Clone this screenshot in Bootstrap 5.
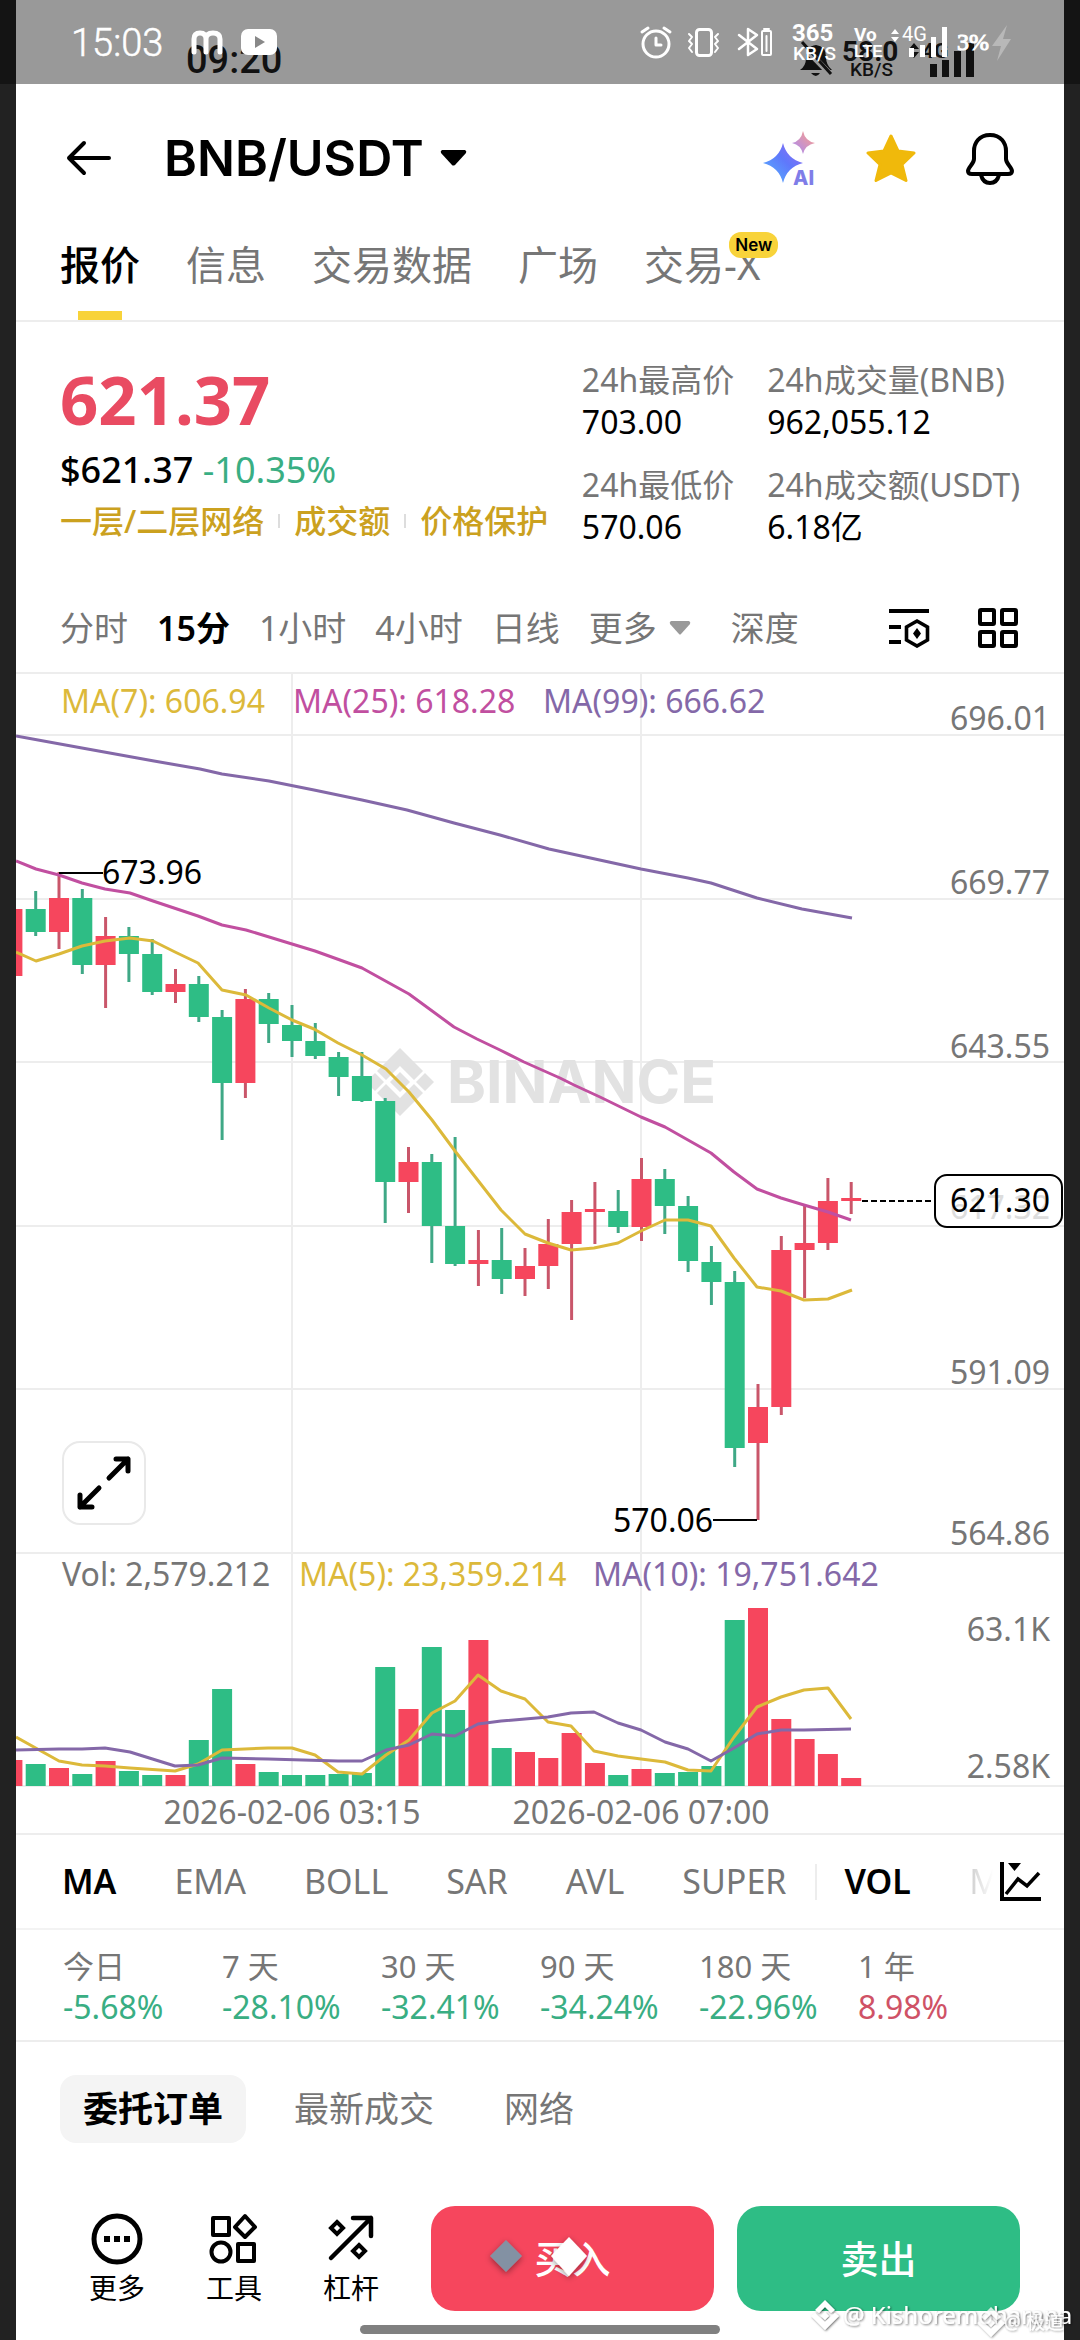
<!DOCTYPE html>
<html lang="zh-CN">
<head>
<meta charset="utf-8">
<meta name="viewport" content="width=device-width, initial-scale=1">
<title>BNB/USDT</title>
<link href="https://cdn.jsdelivr.net/npm/bootstrap@5.3.0/dist/css/bootstrap.min.css" rel="stylesheet">
<style>
:root{--up:#f6465d;--down:#2ebd85;--muted:#767676;--line:#ededed;--edge:16px;--pad:44px}
body{background:#222;color:#000;font-family:"Noto Sans","Noto Sans CJK SC",sans-serif;font-size:32px}
a{color:inherit;text-decoration:none}
button{color:inherit}
svg{display:block}
.strip{background:#141414;padding:0 var(--edge)}
.strip-in{background:#999;height:84px;padding-left:56px;padding-right:52px}
.panel{background:#fff;margin:0 var(--edge)}
.inset{padding-left:var(--pad);padding-right:var(--pad)}
.muted{color:var(--muted)}
.plain{background:none;border:0;padding:0}
.pairbar{height:148px;padding-left:50px;padding-right:48px}
.pair{font-family:Inter,"Noto Sans",sans-serif;font-weight:600;font-size:50px;line-height:60px}
.maintabs{gap:46px;font-size:40px;line-height:66px;border-bottom:2px solid var(--line)}
.maintabs a{position:relative;padding-bottom:22px;color:var(--muted)}
.maintabs a.on{color:#000;font-weight:500}
.maintabs a.on::after{content:"";position:absolute;bottom:0;left:50%;margin-left:-22px;width:44px;height:9px;background:#f8d33a}
.newtag{position:absolute;top:0;right:-18px;background:#f8d33a;color:#000;font:600 17px/26px Inter,sans-serif;padding:0 6px;border-radius:12px}
.summary{height:262px;padding-top:37px}
.lastprice{font-size:67px;line-height:80px;font-weight:700;color:#e94b62}
.usd{font-size:36px;line-height:62px}
.tags{gap:14px;color:#cba11f;line-height:40px;font-weight:500}
.tick{width:2px;height:14px;background:#ddd}
.tick.tall{height:36px;background:#ededed;margin:0 28px}
.facts{row-gap:21px;column-gap:33px;line-height:42px;grid-template-columns:auto auto;align-content:start}
.intervals{height:88px;font-size:34px;color:var(--muted)}
.intervals a{margin-right:29px;white-space:nowrap}
.intervals .more{gap:12px;margin-right:40px}
.intervals .on,.indicators .on{color:#000;font-weight:600}
.chartbox{position:relative}
.chartbox>svg{width:100%;height:auto}
.expand{position:absolute;left:46px;bottom:308px;width:84px;height:84px;border:2px solid #e9e9e9;border-radius:18px;background:#fff}
.indicators{height:97px;padding-left:46px;padding-right:22px;font-size:34px;color:var(--muted);border-top:2px solid var(--line);border-bottom:2px solid #f3f3f3;white-space:nowrap}
.indicators a{margin-right:58px}
.cutoff{color:transparent;background:linear-gradient(90deg,#ccc,#fff 24px);-webkit-background-clip:text;background-clip:text}
.perf{padding:16px 0 12px 47px;border-bottom:2px solid var(--line)}
.perf div{width:159px}
.perf dt{font-size:31px;font-weight:400;line-height:40px;color:var(--muted)}
.perf dd{font-size:32px;line-height:42px;margin:0}
.down{color:#39ae83}.up{color:#cf5266}
.booktabs{padding-top:33px;font-size:35px;line-height:68px}
.booktabs a{margin-right:70px;color:var(--muted)}
.booktabs a.on{background:#f4f4f4;color:#000;font-weight:600;padding:0 23px;border-radius:16px;margin-right:48px}
.quick{gap:61px;padding-left:29px;padding-right:52px}
.quick button{width:56px;font-size:28px;line-height:36px;white-space:nowrap}
.trade{height:105px;border:0;border-radius:24px;color:#fff;font-size:38px;font-weight:500;flex:1 1 0;position:relative}
.buy{background:var(--up)}.sell{background:var(--down)}
.gem{position:absolute;left:50px;top:24px}
.homebar{width:360px;height:9px;border-radius:5px;background:#808080;margin:14px auto 6px}
.credit{position:absolute;right:0;bottom:0;pointer-events:none}
</style>
</head>
<body class="d-flex flex-column min-vh-100 position-relative">

<div class="strip">
  <div class="strip-in d-flex justify-content-between">
    <svg width="230" height="84" viewBox="72 0 230 84" font-family="Roboto,sans-serif">
      <text x="186" y="73" font-size="38" font-weight="500" fill="#111">09:20</text>
      <text x="71" y="56" font-size="38" font-weight="300" fill="#fff" stroke="#fff" stroke-width=".5">15:03</text>
      <path d="M194 52V39q0-6 6-6t6 6v13m0-13q0-6 7-6t7 6v13" fill="none" stroke="#fff" stroke-width="5" stroke-linecap="round"/>
      <rect x="241" y="29" width="36" height="26" rx="7" fill="#fff"/><path d="M255 36l10 6-10 6z" fill="#888"/>
    </svg>
    <svg width="376" height="84" viewBox="636 0 376 84" font-family="Roboto,sans-serif" fill="none">
      <g fill="#111">
        <path d="M800 70q6-4 6-12 0-12 10-13 10 1 10 12 0 8 6 13zM811 73h9q-4 6-9 0z"/>
        <path d="M802 45l29 30" stroke="#999" stroke-width="6"/><path d="M802 42l29 32" stroke="#111" stroke-width="3"/>
        <text x="842" y="61" font-size="28" font-weight="700">58.0</text>
        <text x="850" y="76" font-size="19" font-weight="500">KB/S</text>
        <text x="922" y="58" font-size="21" font-weight="700">4G</text>
        <path d="M909 49l5-6 5 6zm0 3h10l-5 6zM930 64h7v13h-7zM942 60h7v17h-7zM954 51h7v26h-7zM966 43h8v34h-8z"/>
      </g>
      <g stroke="#fff" stroke-width="3" stroke-linecap="round" stroke-linejoin="round">
        <circle cx="656" cy="44" r="13"/><path d="M656 38v7h5M642 32l6-4M670 32l-6-4"/>
        <rect x="696.500" y="29.500" width="15" height="26" rx="3"/>
        <path stroke-width="2" d="M689 34l3 3-3 4 3 3-3 4 3 4M718 34l-3 3 3 4-3 3 3 4-3 4"/>
        <path stroke-width="2.500" d="M739 35l18 14-9 6V29l9 6-18 14"/>
        <rect x="762" y="31" width="9" height="24" rx="1" stroke-width="2"/><path stroke-width="2" d="M766.500 36v15M764 29h5"/>
      </g>
      <g fill="#fff" font-weight="700">
        <text x="792" y="41" font-size="24">365</text><text x="793" y="60" font-size="19" font-weight="500">KB/S</text>
        <text x="854" y="41" font-size="19">Vo</text><text x="854" y="57" font-size="16" font-family="Liberation Sans,sans-serif">LTE</text>
        <text x="902" y="41" font-size="20" font-weight="400">4G</text>
        <path d="M891 34l4-5 4 5zm0 3h8l-4 5zM909 48h5v9h-5zM920 45h5v12h-5zM931 37h5v20h-5zM942 27h5v30h-5z"/>
        <text x="957" y="50" font-size="24" font-weight="400" stroke="#fff" font-family="Liberation Serif,serif">3%</text>
        <path d="M1007 25l-15 21h9l-4 15 14-22h-8z" fill="#b8b8b8"/>
      </g>
    </svg>
  </div>
</div>

<main class="panel flex-grow-1 d-flex flex-column">
  <header class="pairbar d-flex align-items-center">
    <a href="#" aria-label="返回" class="me-5"><svg width="46" height="36" viewBox="0 0 46 36" fill="none" stroke="#000" stroke-width="4" stroke-linecap="round" stroke-linejoin="round"><path d="M43 18H3M18 3L3 18l15 15"/></svg></a>
    <button class="plain pair d-flex align-items-center ms-1">BNB/USDT<svg class="ms-3" width="27" height="16" viewBox="0 0 27 16"><path d="M2 0h23q2 1 1 3L15 15q-2 1-3 0L1 3Q0 1 2 0z"/></svg></button>
    <div class="ms-auto d-flex align-items-center">
      <a href="#" aria-label="AI" class="me-5"><svg width="58" height="56" viewBox="758 129 58 56">
        <defs><linearGradient id="gA" x1="0" y1="1" x2="1" y2="0"><stop offset="0" stop-color="#56b8ff"/><stop offset=".55" stop-color="#5f78fb"/><stop offset="1" stop-color="#9a6cf0"/></linearGradient><linearGradient id="gB" x1="0" y1="1" x2="1" y2="0"><stop offset="0" stop-color="#a58af8"/><stop offset="1" stop-color="#ff9f86"/></linearGradient></defs>
        <path fill="url(#gA)" d="M781 142q4 16 20 20-16 4-20 20-4-16-20-20 16-4 20-20z"/><path fill="url(#gB)" d="M801 130q2 10 12 12-10 2-12 11-2-9-11-11 9-2 11-12z"/>
        <text x="791" y="184" font-family="Inter,sans-serif" font-weight="800" font-size="20" fill="#7f7de8">AI</text></svg></a>
      <a href="#" aria-label="自选" class="me-5"><svg width="50" height="50" viewBox="0 0 50 50"><path d="M25 3l7 15 16 2-12 11.500 4 16L25 40 10 47.500l4-16L2 20l16-2z" fill="#f0b90b" stroke="#f0b90b" stroke-width="3" stroke-linejoin="round"/></svg></a>
      <a href="#" aria-label="提醒"><svg width="52" height="54" viewBox="-1 0 52 54" fill="none" stroke="#000" stroke-width="4" stroke-linejoin="round"><path d="M25 4C14 4 9 12 9 20v8c0 5-6 8-6 12q0 3 4 3h36q4 0 4-3c0-4-6-7-6-12v-8C41 12 36 4 25 4zM16 44q2 8 9 8t9-8"/></svg></a>
    </div>
  </header>

  <nav class="maintabs inset d-flex">
    <a href="#" class="on">报价</a><a href="#">信息</a><a href="#">交易数据</a><a href="#">广场</a><a href="#">交易-X<span class="newtag">New</span></a>
  </nav>

  <section class="summary inset d-flex justify-content-between">
    <div>
      <div class="lastprice">621.37</div>
      <div class="usd"><span class="fw-medium">$621.37</span> <span class="down">-10.35%</span></div>
      <div class="tags d-flex align-items-center"><a href="#">一层/二层网络</a><i class="tick"></i><a href="#">成交额</a><i class="tick"></i><a href="#">价格保护</a></div>
    </div>
    <div class="facts d-grid">
      <div><div class="muted">24h最高价</div>703.00</div>
      <div><div class="muted">24h成交量(BNB)</div>962,055.12</div>
      <div><div class="muted">24h最低价</div>570.06</div>
      <div><div class="muted">24h成交额(USDT)</div>6.18亿</div>
    </div>
  </section>

  <nav class="intervals inset d-flex align-items-center">
    <a href="#">分时</a><a href="#" class="on">15分</a><a href="#">1小时</a><a href="#">4小时</a><a href="#">日线</a>
    <a href="#" class="more d-flex align-items-center">更多<svg width="22" height="14" viewBox="0 0 22 14"><path d="M2 0h18q2 1 1 3l-9 10q-1 1-2 0L1 3Q0 1 2 0z" fill="#999"/></svg></a>
    <a href="#" class="me-0">深度</a>
    <button class="plain ms-auto me-5" aria-label="指标"><svg width="42" height="40" viewBox="0 0 42 40" fill="none" stroke="#000" stroke-width="4"><path d="M1 3h40M1 19h12M1 34h12"/><path d="M29 13l10.500 6v13L29 38l-10.500-6V19z" stroke-width="3.600"/><path d="M29 20l4 5.500-4 5.500-4-5.500z" fill="#000" stroke="none"/></svg></button>
    <button class="plain" aria-label="布局"><svg width="42" height="40" viewBox="0 0 42 40" fill="none" stroke="#000" stroke-width="4"><rect x="2" y="2" width="14" height="14" rx="1"/><rect x="24" y="2" width="14" height="14" rx="1"/><rect x="2" y="24" width="14" height="14" rx="1"/><rect x="24" y="24" width="14" height="14" rx="1"/></svg></button>
  </nav>

  <section class="chartbox">
    <svg viewBox="16 672 1048 1161" font-family="Noto Sans,sans-serif" font-size="32" fill="none">
      <path d="M16 673H1064M16 735H1064M16 899H1064M16 1062H1064M16 1226H1064M16 1389H1064M16 1553H1064M16 1786H1064M292 673V1786M641 673V1786" stroke="#ededed" stroke-width="2"/>
      <g fill="#e2e2e2"><path d="M400 1048l23 23-9 9-14-14-14 14-9-9zM400 1116l-23-23 9-9 14 14 14-14 9 9zM375 1073l9 9-9 9-9-9zM425 1073l9 9-9 9-9-9zM400 1072l10 10-10 10-10-10z"/>
      <text x="447" y="1103" font-family="Inter,sans-serif" font-weight="700" font-size="59">BINANCE</text></g>
      <g id="bars"></g>
      <g stroke-width="3" stroke-linejoin="round">
        <polyline stroke="#8468a8" points="16,736 82,748 154,761 200,769 222,774 269,781 314,790 362,800 407,810 454,823 500,835 549,849 595,859 641,869 688,878 711,883 757,898 802,909 852,918"/>
        <polyline stroke="#c14fa0" points="16,861 36,869 59,875 82,883 105,889 130,893 153,901 198,916 222,925 246,930 292,944 315,951 340,960 362,968 409,994 454,1027 477,1039 500,1050 524,1062 560,1078 574,1085 600,1097 641,1117 665,1127 711,1153 734,1172 757,1189 781,1198 804,1205 828,1212 851,1220"/>
        <polyline stroke="#dcb93a" points="16,952 36,961 59,954 82,946 105,941 130,938 153,941 175,952 198,963 222,990 246,995 269,1008 292,1020 314,1029 338,1043 362,1055 386,1069 409,1092 432,1120 455,1151 501,1210 525,1234 548,1243 571,1250 594,1248 618,1243 641,1231 665,1220 688,1220 711,1226 734,1258 757,1287 781,1291 804,1300 828,1299 852,1290"/>
        <polyline stroke="#dcb93a" points="16,1737 59,1761 82,1765 105,1766 130,1768 175,1771 198,1764 222,1750 268,1748 292,1748 315,1755 338,1772 362,1774 386,1755 409,1740 432,1713 455,1701 478,1675 501,1691 525,1699 548,1722 571,1726 594,1751 618,1756 641,1759 665,1762 688,1770 711,1771 734,1737 757,1707 781,1697 804,1690 828,1688 851,1719"/>
        <polyline stroke="#8468a8" points="16,1750 59,1749 82,1749 105,1748 130,1752 175,1766 198,1765 222,1758 268,1759 338,1761 362,1761 386,1750 409,1745 432,1734 455,1736 478,1724 501,1721 548,1717 571,1713 594,1712 618,1723 641,1730 665,1742 688,1749 711,1761 734,1748 757,1734 781,1730 804,1730 851,1729"/>
      </g>
      <path d="M59 873H103M713 1520H757" stroke="#000" stroke-width="2"/>
      <path d="M862 1201H934" stroke="#000" stroke-width="2" stroke-dasharray="6 3"/>
      <g fill="#dcb93a"><text x="61" y="713">MA(7): 606.94</text><text x="299" y="1586">MA(5): 23,359.214</text></g>
      <text x="293" y="713" fill="#c14fa0">MA(25): 618.28</text>
      <g fill="#8468a8"><text x="543" y="713">MA(99): 666.62</text><text x="593" y="1586">MA(10): 19,751.642</text></g>
      <g fill="#767676"><text x="62" y="1586">Vol: 2,579.212</text>
        <g text-anchor="end"><text x="1050" y="730">696.01</text><text x="1050" y="894">669.77</text><text x="1050" y="1058">643.55</text><text x="1050" y="1384">591.09</text><text x="1050" y="1545">564.86</text><text x="1050" y="1641">63.1K</text><text x="1050" y="1778">2.58K</text></g>
        <g text-anchor="middle"><text x="292" y="1824">2026-02-06 03:15</text><text x="641" y="1824">2026-02-06 07:00</text></g></g>
      <rect x="935" y="1175" width="127" height="52" rx="12" fill="#fff" stroke="#000" stroke-width="2"/>
      <text x="1050" y="1219" text-anchor="end" fill="#ddd">617.32</text>
      <g fill="#000"><text x="1050" y="1212" text-anchor="end">621.30</text><text x="102" y="884">673.96</text><text x="613" y="1532">570.06</text></g>
    </svg>
    <button class="expand d-flex align-items-center justify-content-center p-0" aria-label="全屏"><svg width="56" height="56" viewBox="-1 -1 56 56" fill="none" stroke="#000" stroke-width="5" stroke-linecap="round" stroke-linejoin="round"><path d="M32 22L51 3M39 3h12v12M22 32L3 51M3 39v12h12"/></svg></button>
  </section>

  <nav class="indicators d-flex align-items-center">
    <a href="#" class="on">MA</a><a href="#">EMA</a><a href="#">BOLL</a><a href="#">SAR</a><a href="#">AVL</a><a href="#" class="me-0">SUPER</a>
    <i class="tick tall"></i><a href="#" class="on me-0">VOL</a>
    <a href="#" class="cutoff ms-auto me-0">M</a>
    <button class="plain" aria-label="指标设置"><svg width="42" height="42" viewBox="0 0 42 42" fill="none" stroke="#000" stroke-width="4"><path d="M2 1v37h39"/><path d="M6 33l12-15 9 7 12-13" stroke-width="3.500"/><path d="M8 2h13l-6.500 8z" fill="#000" stroke="none"/></svg></button>
  </nav>

  <dl class="perf d-flex mb-0">
    <div><dt>今日</dt><dd class="down">-5.68%</dd></div><div><dt>7 天</dt><dd class="down">-28.10%</dd></div><div><dt>30 天</dt><dd class="down">-32.41%</dd></div><div><dt>90 天</dt><dd class="down">-34.24%</dd></div><div><dt>180 天</dt><dd class="down">-22.96%</dd></div><div><dt>1 年</dt><dd class="up">8.98%</dd></div>
  </dl>

  <nav class="booktabs inset d-flex"><a href="#" class="on">委托订单</a><a href="#">最新成交</a><a href="#">网络</a></nav>

  <footer class="mt-auto">
    <div class="inset d-flex align-items-center">
      <div class="quick d-flex">
        <button class="plain d-flex flex-column align-items-center"><svg class="mb-1" width="54" height="54" viewBox="0 0 54 54" fill="none" stroke="#000" stroke-width="5"><circle cx="27" cy="27" r="23"/><path d="M14 27h6M24 27h6M34 27h6" stroke-width="6"/></svg>更多</button>
        <button class="plain d-flex flex-column align-items-center"><svg class="mb-1" width="54" height="54" viewBox="0 0 54 54" fill="none" stroke="#000" stroke-width="4" stroke-linejoin="round"><rect x="6" y="6" width="16" height="17"/><path d="M38 4l10 11-10 10-10-10z"/><circle cx="14" cy="40" r="9.500"/><rect x="31" y="32" width="16" height="17"/></svg>工具</button>
        <button class="plain d-flex flex-column align-items-center"><svg class="mb-1" width="54" height="54" viewBox="0 0 54 54" fill="none" stroke="#000" stroke-width="4.500" stroke-linecap="round" stroke-linejoin="round"><path d="M7 46L47 6M29 6h18v18"/><path d="M13 10l6 6-6 6-6-6zM35 33l6 6-6 6-6-6z" stroke-width="4" stroke-linejoin="miter"/></svg>杠杆</button>
      </div>
      <div class="d-flex flex-grow-1" style="gap:23px">
        <button class="trade buy">买入<svg class="gem" width="118" height="56" viewBox="0 0 118 56"><defs><filter id="sh" x="-30%" y="-30%" width="160%" height="160%"><feDropShadow dx="0" dy="2" stdDeviation="3" flood-opacity=".4"/></filter></defs><g filter="url(#sh)"><path d="M25 10l16 16-16 16L9 26z" fill="#8391a3"/><path d="M88 7l18 19-18 20-18-20z" fill="#fff"/></g></svg></button>
        <button class="trade sell">卖出</button>
      </div>
    </div>
    <div class="homebar"></div>
  </footer>
</main>

<svg class="credit" width="280" height="60" viewBox="800 2280 280 60" fill="#fff" font-family="Noto Sans,Noto Sans CJK SC,sans-serif" font-size="24">
  <defs><filter id="cs"><feDropShadow dx="1" dy="1" stdDeviation="1" flood-opacity=".55"/></filter>
  <g id="mk"><path d="M0-15L10-5 6-2 0-8-6-2-10-5zM-14 1l4-3 10 9L10-2l4 3L0 15zM0-3l4 4-4 4-4-4z"/></g></defs>
  <g filter="url(#cs)"><use href="#mk" x="825" y="2315"/><text x="843" y="2324">@ Kishoremoharana</text></g>
  <g filter="url(#cs)" opacity=".75" font-size="19"><use href="#mk" x="991" y="2322"/><text x="1004" y="2329">@ 极道</text></g>
</svg>

<script src="https://cdn.jsdelivr.net/npm/bootstrap@5.3.0/dist/js/bootstrap.bundle.min.js"></script>
<script>
// colour, high, body top, body bottom, low, volume top
const rows=`R 909 909 976 976 1760
G 891 909 932 936 1764
R 872 898 932 949 1768
G 889 898 965 974 1774
R 917 936 965 1008 1761
G 927 936 954 982 1771
G 939 954 992 995 1775
R 969 984 992 1003 1775
G 976 984 1017 1022 1740
G 1010 1017 1083 1140 1689
R 989 999 1083 1098 1764
G 993 999 1024 1043 1772
G 1005 1025 1041 1057 1775
G 1023 1041 1056 1059 1775
G 1052 1057 1077 1096 1774
G 1052 1076 1101 1102 1773
G 1098 1101 1182 1223 1667
R 1147 1162 1182 1213 1709
G 1154 1162 1226 1263 1647
G 1137 1226 1264 1266 1710
R 1230 1260 1264 1286 1640
G 1228 1260 1279 1294 1748
R 1248 1266 1279 1296 1752
R 1219 1244 1266 1289 1758
R 1200 1212 1244 1320 1733
R 1182 1209 1212 1244 1763
G 1190 1211 1227 1233 1775
R 1158 1179 1227 1241 1769
G 1169 1179 1206 1234 1773
G 1196 1206 1261 1272 1772
G 1246 1262 1282 1305 1766
G 1271 1282 1448 1467 1620
R 1384 1407 1443 1520 1608
R 1236 1250 1407 1415 1719
R 1205 1243 1250 1298 1739
R 1178 1201 1243 1250 1754
R 1182 1198 1201 1214 1778`.split("\n");
document.getElementById("bars").innerHTML=rows.map((r,i)=>{
  const [c,h,t,b,l,v]=r.split(" "),x=12.4+i*23.3,f=c==="R"?"#f6465d":"#2ebd85",w=c==="R"?"#c9566a":"#3fa886";
  return `<path d="M${x} ${h}V${l}" stroke="${w}" stroke-width="3"/><path d="M${x-10} ${t}h20V${b}h-20zM${x-10} ${v}h20V1786h-20z" fill="${f}"/>`;
}).join("");
</script>
</body>
</html>
